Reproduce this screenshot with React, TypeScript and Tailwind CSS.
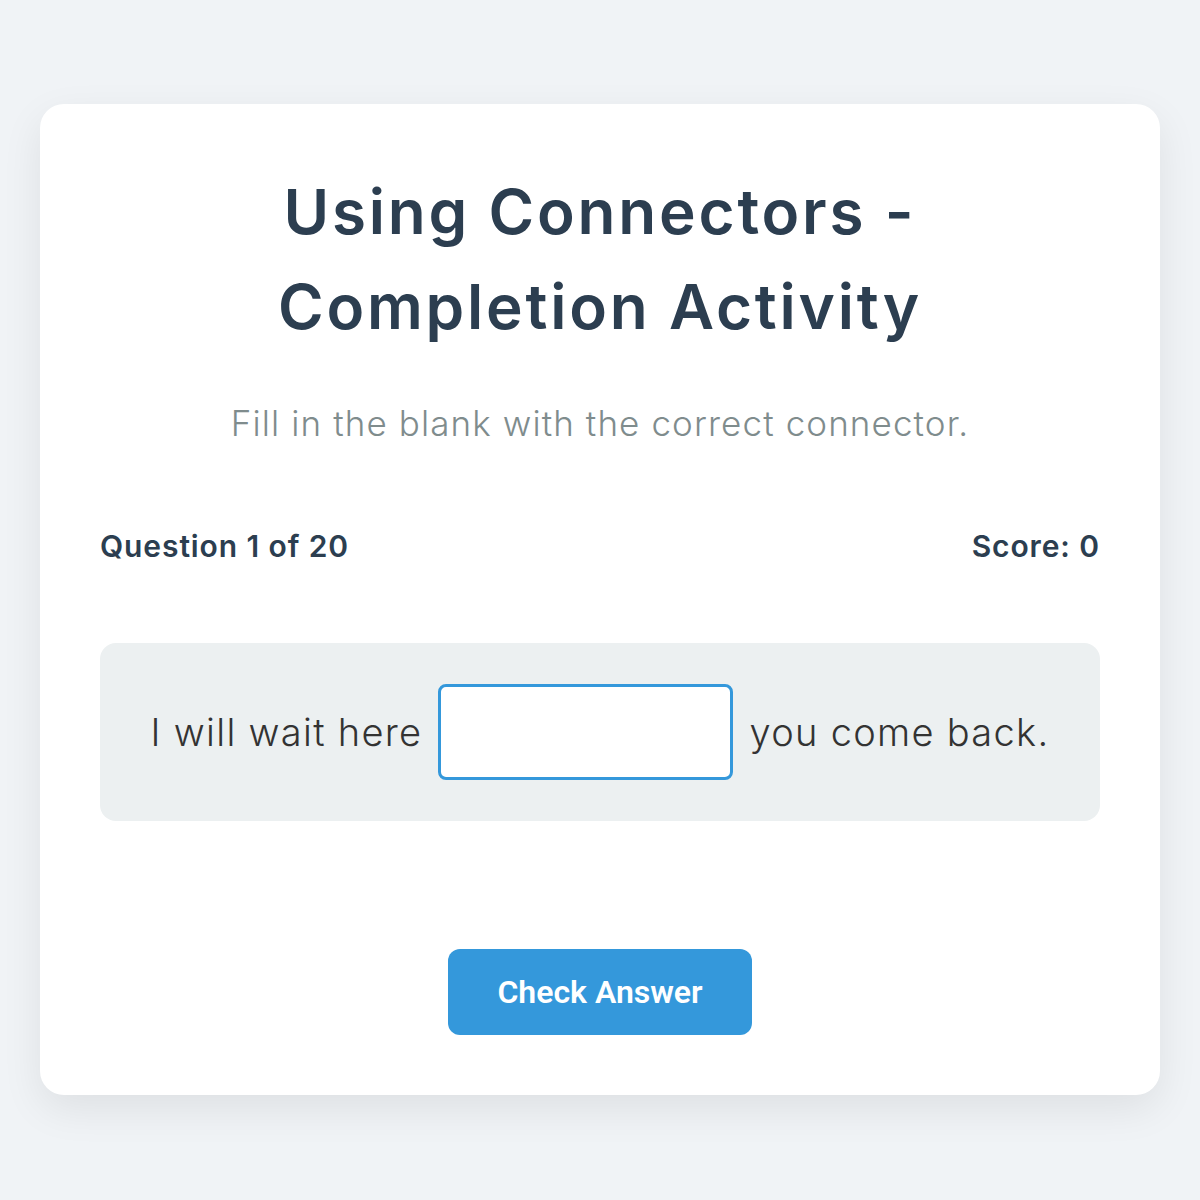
import { useState } from "react";

const font = "font-['Inter','Open_Sans',sans-serif]";

export default function App() {
  const [answer, setAnswer] = useState("");
  const question = 1;
  const total = 20;
  const score = 0;

  return (
    <div className={`min-h-screen bg-[#f0f3f6] pt-[104px] pb-[104px] ${font}`}>
      <div className="mx-auto w-[1120px] rounded-[24px] bg-white px-[60px] pt-[60px] pb-[60px] shadow-[0_14px_40px_rgba(0,0,0,0.08)]">
        <h1 className="mx-auto max-w-[760px] text-center text-[62px] leading-[95px] font-semibold tracking-[2.8px] text-[#2c3e50]">
          Using Connectors - Completion Activity
        </h1>
        <p className="mt-[45px] text-center text-[35px] leading-[48px] font-light tracking-[1.1px] text-[#7f8c8d]">
          Fill in the blank with the correct connector.
        </p>

        <div className="mt-[77px] flex items-center justify-between text-[30px] leading-[45px] font-semibold tracking-[0.9px] text-[#2c3e50]">
          <span>
            Question {question} of {total}
          </span>
          <span>Score: {score}</span>
        </div>

        <div className="mt-[74px] flex items-center justify-center gap-4 rounded-[16px] bg-[#ecf0f1] py-[41px] text-[38px] font-light tracking-[1.3px] text-[#333]">
          <span>I will wait here</span>
          <input
            value={answer}
            onChange={(e) => setAnswer(e.target.value)}
            className="h-[96px] w-[295px] rounded-[8px] border-[3px] border-[#3498db] bg-white px-3 text-center text-[32px] outline-none"
          />
          <span>you come back.</span>
        </div>

        <div className="mt-[128px] flex justify-center">
          <button className="h-[86px] w-[304px] rounded-[12px] bg-[#3498db] font-['Roboto',sans-serif] text-[32px] font-semibold text-white">
            Check Answer
          </button>
        </div>
      </div>
    </div>
  );
}
